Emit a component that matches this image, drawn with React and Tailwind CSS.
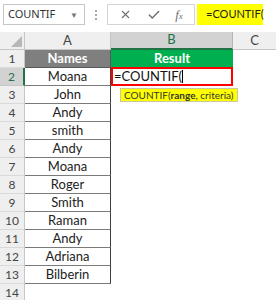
import { X, Check } from 'lucide-react'

const names = ['Moana', 'John', 'Andy', 'smith', 'Andy', 'Moana', 'Roger', 'Smith', 'Raman', 'Andy', 'Adriana', 'Bilberin']

function RowHead({ n, active }) {
  return (
    <div
      className={
        active
          ? 'w-[25px] h-full flex items-center justify-center bg-[#d2d2d2] text-[#217346] border-r-2 border-r-[#217346] border-b border-b-[#c6c6c6] text-[12px]'
          : 'w-[25px] h-full flex items-center justify-center bg-[#efefef] text-[#444] border-r border-r-[#c6c6c6] border-b border-b-[#d9d9d9] text-[12px]'
      }
    >
      {n}
    </div>
  )
}

export default function App() {
  return (
    <div className="relative w-[276px] h-[300px] bg-white overflow-hidden font-['Lato',sans-serif] text-[#222]">
      {/* formula bar */}
      <div className="h-[32px] flex items-start pt-[4px] pl-[3px]">
        <div className="w-[82px] h-[21px] border border-[#c6c6c6] bg-white flex items-center justify-between pl-[4px] pr-[6px] font-['Noto_Sans',sans-serif] text-[11px] text-[#333]">
          <span>COUNTIF</span>
          <span className="text-[8px] text-[#777]">▼</span>
        </div>
        <div className="w-[22px] h-[21px] flex flex-col items-center justify-center gap-[2px]">
          <span className="w-[2px] h-[2px] bg-[#aaa]" />
          <span className="w-[2px] h-[2px] bg-[#aaa]" />
          <span className="w-[2px] h-[2px] bg-[#aaa]" />
        </div>
        <div className="w-[88px] h-[21px] border border-[#d4d4d4] bg-white flex items-center justify-around px-[4px] text-[#707070]">
          <X size={13} strokeWidth={2} />
          <Check size={14} strokeWidth={2.5} />
          <span className="font-['Liberation_Serif',serif] italic text-[13px] leading-none">
            f<span className="text-[9px]">x</span>
          </span>
        </div>
        <div className="ml-[2px] flex-1 h-[21px] flex">
          <div className="w-[66px] h-full bg-[#ffff00] flex items-center pl-[9px] text-[11px] text-[#222] whitespace-nowrap">
            =COUNTIF(
          </div>
        </div>
      </div>

      {/* column headers */}
      <div className="h-[18px] flex text-[13px]">
        <div className="w-[25px] h-full bg-[#efefef] border-r border-b border-[#c6c6c6] flex items-end justify-end p-[2px]">
          <div className="w-0 h-0 border-l-[11px] border-l-transparent border-b-[11px] border-b-[#b7b7b7]" />
        </div>
        <div className="w-[86px] h-full bg-[#efefef] border-r border-b border-[#c6c6c6] flex items-center justify-center text-[#444]">A</div>
        <div className="w-[122px] h-full bg-[#d2d2d2] border-r border-[#b5b5b5] border-b-2 border-b-[#217346] flex items-center justify-center text-[#217346]">B</div>
        <div className="flex-1 h-full bg-[#efefef] border-b border-[#c6c6c6] flex items-center justify-center text-[#444]">C</div>
      </div>

      {/* row 1 */}
      <div className="h-[18px] flex">
        <RowHead n={1} />
        <div className="w-[86px] h-full bg-[#7f7f7f] border-r border-b border-[#595959] flex items-center justify-center text-white font-bold text-[13px]">Names</div>
        <div className="w-[122px] h-full bg-[#00b050] border-b border-[#00b050] flex items-center justify-center text-white font-bold text-[13px]">Result</div>
      </div>

      {/* rows 2..13 */}
      {names.map((name, i) => (
        <div key={i} className="h-[18px] flex">
          <RowHead n={i + 2} active={i === 0} />
          <div className="w-[86px] h-full bg-white border-r border-r-[#3f3f3f] border-b border-b-[#7a7a7a] flex items-center justify-center text-[13px]">{name}</div>
          {i === 0 && (
            <div className="w-[122px] h-[19px] -mt-[1px] border-2 border-[#ff0000] flex items-center pl-[1px] text-[13px] text-[#111]">
              =COUNTIF(<span className="w-px h-[13px] bg-black" />
            </div>
          )}
        </div>
      ))}

      {/* row 14 */}
      <div className="h-[18px] flex">
        <RowHead n={14} />
      </div>

      {/* function tooltip */}
      <div className="absolute left-[120px] top-[88px] h-[14px] px-[3px] bg-[#ffff00] border border-[#c8c8a0] flex items-center text-[10px] text-[#333] leading-none whitespace-nowrap">
        COUNTIF(<b>range</b>, criteria)
      </div>
    </div>
  )
}
